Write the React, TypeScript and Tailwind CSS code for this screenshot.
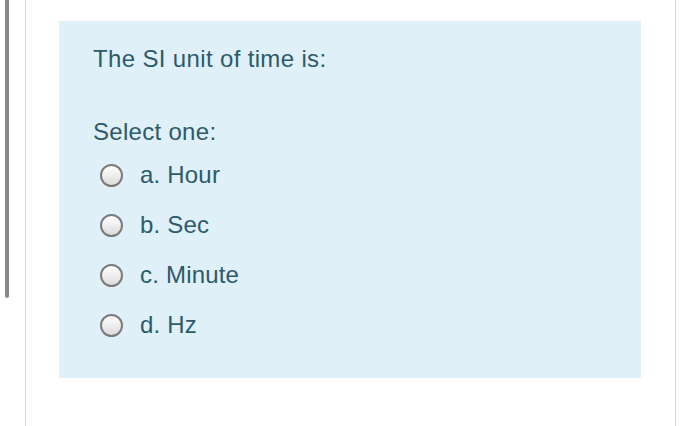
import React from "react";

const OPTIONS = ["a. Hour", "b. Sec", "c. Minute", "d. Hz"];

function Radio() {
  return (
    <span className="block h-[23px] w-[23px] shrink-0 rounded-full border-2 border-[#7a7a7a] bg-gradient-to-b from-[#ffffff] to-[#dcdcdc]" />
  );
}

export default function App() {
  return (
    <div
      className="relative h-[426px] w-[700px] overflow-hidden bg-white"
      style={{ fontFamily: '"Liberation Sans", Arial, sans-serif' }}
    >
      {/* scroll indicator */}
      <div className="absolute left-[5px] top-0 h-[298px] w-[4px] rounded-b-sm bg-[#8a8a8a]" />

      <div className="ml-[25px] h-full w-[651px] border-x border-[#d6d6d6] pt-[21px]">
        <div className="ml-[33px] h-[357px] w-[582px] bg-[#dff0f8] pl-[34px] pt-[22px] text-[#2d5a6a]">
          <div className="text-[24px] leading-[32px] tracking-[0.35px]">The SI unit of time is:</div>
          <div className="mt-[41px] text-[24px] leading-[32px] tracking-[0.3px]">Select one:</div>
          <div className="mt-[2px] flex flex-col">
            {OPTIONS.map((o) => (
              <label key={o} className="flex h-[50px] items-center pl-[7px]">
                <Radio />
                <span className="ml-[17px] text-[24px] tracking-[0.2px]">{o}</span>
              </label>
            ))}
          </div>
        </div>
      </div>
    </div>
  );
}
